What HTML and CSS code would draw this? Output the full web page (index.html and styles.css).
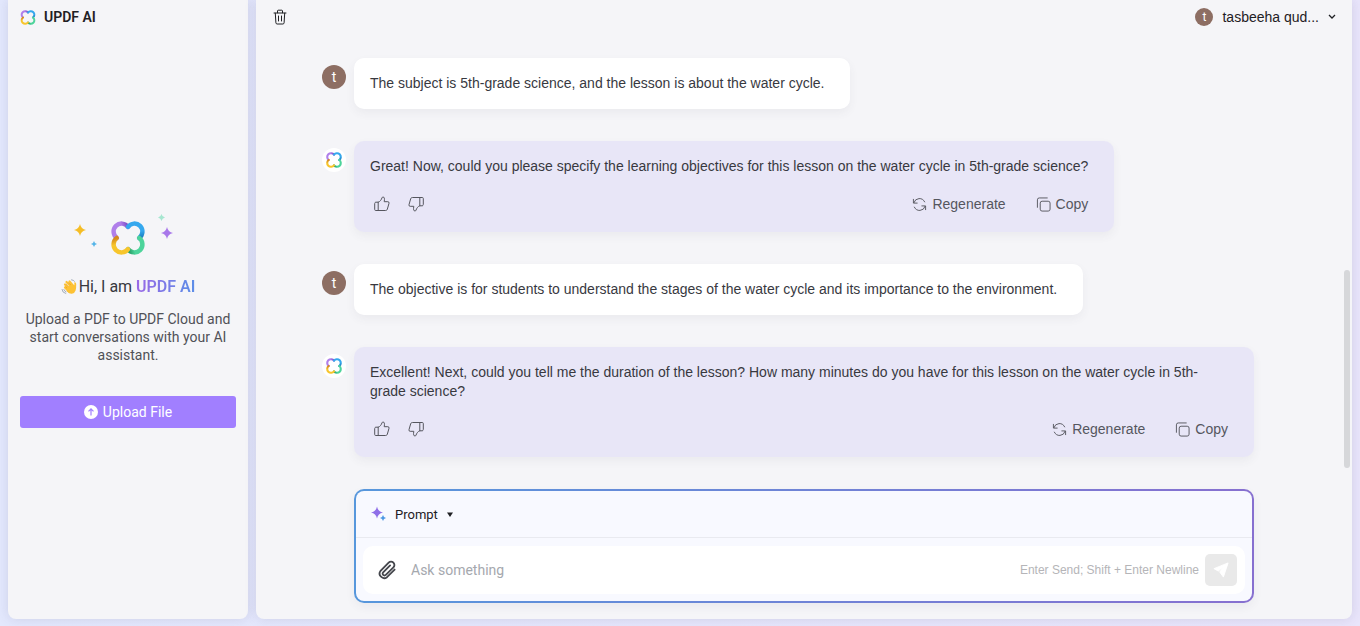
FILE: index.html
```html
<!DOCTYPE html>
<html lang="en">
<head>
<meta charset="utf-8">
<meta name="viewport" content="width=device-width, initial-scale=1">
<title>UPDF AI</title>
<link rel="stylesheet" href="styles.css">
</head>
<body>
<svg class="defs" aria-hidden="true">
  <defs>
    <linearGradient id="g-purple" gradientUnits="userSpaceOnUse" x1="-12" y1="-8" x2="0" y2="-11"><stop offset=".5" stop-color="#b07fea"/><stop offset="1" stop-color="#7a4fc6"/></linearGradient>
    <linearGradient id="g-blue" gradientUnits="userSpaceOnUse" x1="8" y1="-12" x2="11" y2="0"><stop offset=".5" stop-color="#35a8ee"/><stop offset="1" stop-color="#1c7fc0"/></linearGradient>
    <linearGradient id="g-green" gradientUnits="userSpaceOnUse" x1="12" y1="8" x2="0" y2="11"><stop offset=".5" stop-color="#4dd49b"/><stop offset="1" stop-color="#229a63"/></linearGradient>
    <linearGradient id="g-yellow" gradientUnits="userSpaceOnUse" x1="-8" y1="12" x2="-11" y2="0"><stop offset=".5" stop-color="#f7c52c"/><stop offset="1" stop-color="#d58a1c"/></linearGradient>
    <symbol id="clover" viewBox="-17 -17 34 34">
      <g fill="none" stroke-width="4.500" stroke-linecap="round">
        <path stroke="url(#g-purple)" d="M-11.200 0A8 8 0 1 1 0-11.200"/>
        <path stroke="url(#g-blue)" d="M0-11.200A8 8 0 1 1 11.200 0"/>
        <path stroke="url(#g-green)" d="M11.200 0A8 8 0 1 1 0 11.200"/>
        <path stroke="url(#g-yellow)" d="M0 11.200A8 8 0 1 1-11.200 0"/>
      </g>
    </symbol>
    <symbol id="up" viewBox="0 0 16 16"><path d="M1.2 6.500Q.7 6.900.7 7.600v5.900q0 1 1 1h9.900q1.300 0 1.700-1.200l1.700-6q.3-1.600-1.200-1.600H10.200q.9-4.700-1.200-4.700-.7 0-1 .8C7.300 3.800 6.200 5.500 4.200 6.200H1.700M4.200 6.200v8.300" fill="none" stroke="currentColor" stroke-linejoin="round" stroke-linecap="round"/></symbol>
    <symbol id="regen" viewBox="0 0 16 16"><path d="M1.500 2.500v4h4M2 6a6.200 6.200 0 0 1 11.500-.8M14.500 13.500v-4h-4M14 10a6.200 6.200 0 0 1-11.500.8" fill="none" stroke="currentColor" stroke-linecap="round" stroke-linejoin="round"/></symbol>
    <symbol id="copy" viewBox="0 0 16 16"><g fill="none" stroke="currentColor"><rect x="4.500" y="4.500" width="10.500" height="10.500" rx="2"/><path d="M1.500 11V3q0-2 2-2h8.500" stroke-linecap="round"/></g></symbol>
    <symbol id="spark" viewBox="-6 -6 12 12"><path d="M0-6Q1-1 6 0 1 1 0 6-1 1-6 0-1-1 0-6Z" fill="currentColor"/></symbol>
  </defs>
</svg>
<div class="app">
  <aside class="sidebar">
    <header class="brand"><svg class="brand-logo"><use href="#clover"/></svg><span>UPDF AI</span></header>
    <section class="welcome">
      <svg class="hero" viewBox="3 1 110 50">
        <use href="#clover" x="41" y="10" width="34" height="34"/>
        <use href="#spark" x="4" y="13" width="12" height="12" color="#f5bd25"/>
        <use href="#spark" x="21" y="30" width="6" height="6" color="#54b4e8"/>
        <use href="#spark" x="88" y="3" width="7" height="7" color="#a6e6d0"/>
        <use href="#spark" x="91" y="16" width="12" height="12" color="#a877ea"/>
      </svg>
      <h1 class="greeting">
        <svg class="wave" viewBox="0 0 16 16" aria-hidden="true">
          <g fill="none" stroke-linecap="round">
            <path d="M4 5.500l5.500 5.500M5.500 3l6 6M8.500 2.500l5 6M4 8.500l4 4" stroke="#fdc235" stroke-width="2.200"/>
            <path d="M5 5.200l4 4M7.500 3.600l3.500 3.800M4.500 7.700l3 3" stroke="#dc8c1c" stroke-width=".5"/>
          </g>
          <path d="M6 8l5.500-3 1.500 1.500q.6-.5.300-3 1.700-.6 1.900 1.500.1 4.500-.6 6.500-1 3-3.800 3.300-2.500.2-5-2.500z" fill="#fdc235"/>
          <path d="M1 10.500q.3 3.300 3.800 4M2.800 10.500q.5 1.800 2.200 2.300M10.500.8q2 .1 3 1.500" fill="none" stroke="#8f9bab" stroke-width=".8" stroke-linecap="round"/>
        </svg><span>Hi, I am <b>UPDF AI</b></span>
      </h1>
      <p class="intro">Upload a PDF to UPDF Cloud and start conversations with your AI assistant.</p>
      <button class="upload" type="button"><svg viewBox="0 0 14 14"><circle cx="7" cy="7" r="7" fill="#fff"/><path d="M7 10.500V4M4.500 6.300L7 3.800l2.500 2.500" fill="none" stroke="#a17fff" stroke-width="1.200"/></svg>Upload File</button>
    </section>
  </aside>
  <main class="panel">
    <header class="topbar">
      <button class="icon-btn trash" type="button" aria-label="Delete conversation"><svg viewBox="0 0 14 16"><path d="M1 4h12M4.500 3.800V2q0-.8.800-.8h3.400q.8 0 .8.800v1.800M2.300 4.200l.6 9.600q.1 1.200 1.200 1.200h5.800q1.100 0 1.200-1.200l.6-9.600M5.500 7v5M8.500 7v5" fill="none" stroke="currentColor" stroke-linecap="round"/></svg></button>
      <button class="account" type="button"><span class="avatar small">t</span><span>tasbeeha qud...</span><svg viewBox="0 0 8 6"><path d="M1 1l3 3 3-3" fill="none" stroke="currentColor" stroke-width="1.300"/></svg></button>
    </header>
    <div class="chat">
      <article class="message user"><span class="avatar">t</span><div class="bubble"><p>The subject is 5th-grade science, and the lesson is about the water cycle.</p></div></article>
      <article class="message bot"><span class="avatar"><svg><use href="#clover"/></svg></span>
        <div class="bubble"><p>Great! Now, could you please specify the learning objectives for this lesson on the water cycle in 5th-grade science?</p>
          <footer class="actions">
            <button class="icon-btn" type="button" aria-label="Like"><svg><use href="#up"/></svg></button>
            <button class="icon-btn down" type="button" aria-label="Dislike"><svg><use href="#up"/></svg></button>
            <button class="text-btn first" type="button"><svg><use href="#regen"/></svg>Regenerate</button>
            <button class="text-btn" type="button"><svg><use href="#copy"/></svg>Copy</button>
          </footer></div></article>
      <article class="message user"><span class="avatar">t</span><div class="bubble"><p>The objective is for students to understand the stages of the water cycle and its importance to the environment.</p></div></article>
      <article class="message bot"><span class="avatar"><svg><use href="#clover"/></svg></span>
        <div class="bubble"><p>Excellent! Next, could you tell me the duration of the lesson? How many minutes do you have for this lesson on the water cycle in 5th-<wbr>grade science?</p>
          <footer class="actions">
            <button class="icon-btn" type="button" aria-label="Like"><svg><use href="#up"/></svg></button>
            <button class="icon-btn down" type="button" aria-label="Dislike"><svg><use href="#up"/></svg></button>
            <button class="text-btn first" type="button"><svg><use href="#regen"/></svg>Regenerate</button>
            <button class="text-btn" type="button"><svg><use href="#copy"/></svg>Copy</button>
          </footer></div></article>
      <form class="composer">
        <div class="prompt-row"><button class="prompt" type="button">
          <svg class="prompt-icon" viewBox="0 0 16 16"><use href="#spark" x="1" y="0" width="12" height="13" color="#8f6fe8"/><use href="#spark" x="10" y="9" width="6" height="6" color="#4c97e4"/></svg>
          <span>Prompt</span><svg class="caret" viewBox="0 0 6 5"><path d="M0 .5h6L3 5z" fill="currentColor"/></svg></button></div>
        <div class="entry">
          <button class="icon-btn clip" type="button" aria-label="Attach file"><svg viewBox="0 0 24 24"><path d="M19.500 10.500l-8.300 8.300a5 5 0 0 1-7-7L13 3a3.600 3.600 0 0 1 5.200 5.200l-8.300 8.200a2 2 0 0 1-2.900-2.900l7.600-7.500" transform="translate(.8 1)" fill="none" stroke="currentColor" stroke-width="2" stroke-linecap="round"/></svg></button>
          <input type="text" aria-label="Message" placeholder="Ask something">
          <span class="hint">Enter Send; Shift + Enter Newline</span>
          <button class="send" type="submit" aria-label="Send"><svg viewBox="0 0 18 18"><path d="M17 1L1 7.500l5 2.700 5.500-4.500-4 5.500 4.200 5.800z" fill="#fff" stroke="#fff" stroke-linejoin="round"/></svg></button>
        </div>
      </form>
    </div>
    <div class="scroll-thumb"></div>
  </main>
</div>
</body>
</html>
```

FILE: styles.css
```css
* { box-sizing: border-box; }
body {
  margin: 0;
  background: linear-gradient(90deg, #e3e8fd, #e9e5fb);
  color: #38393f;
  font: 14px/19px Roboto, "Liberation Sans", sans-serif;
}
button { padding: 0; border: 0; background: none; color: inherit; font: inherit; cursor: pointer; }
h1, p { margin: 0; font-size: inherit; font-weight: 400; }
svg { flex: none; }
.defs { position: absolute; width: 0; height: 0; }
.app { display: flex; gap: 8px; min-height: 100vh; padding: 0 8px 7px; }
.sidebar, .panel {
  background: #f5f5f8;
  border-radius: 0 0 8px 8px;
  box-shadow: 0 0 12px rgba(80, 80, 120, .16);
}
.sidebar { display: flex; flex-direction: column; width: 240px; padding: 0 12px; }
.brand { display: flex; align-items: center; gap: 8px; height: 34px; color: #1f2024; font-weight: 600; }
.brand-logo { width: 16px; height: 15px; }
.welcome { display: flex; flex-direction: column; align-items: center; padding-top: 178px; }
.hero { width: 110px; height: 50px; }
.greeting { display: flex; align-items: center; gap: 2px; margin-top: 13px; font-size: 16px; line-height: 24px; }
.greeting b { font-weight: 600; color: transparent; background: linear-gradient(90deg, #9a68e6, #5c8ee8); background-clip: text; }
.wave { width: 16px; height: 16px; }
.intro { margin-top: 11px; line-height: 18px; color: #505157; text-align: center; }
.upload {
  display: flex; align-items: center; justify-content: center; gap: 5px;
  align-self: stretch; height: 32px; margin-top: 32px;
  border-radius: 3px; background: #a17fff; color: #fff;
}
.upload svg { width: 14px; height: 14px; }
.panel { position: relative; flex: 1; min-width: 0; }
.topbar { display: flex; align-items: center; justify-content: space-between; height: 34px; padding: 0 16px; color: #1f2024; }
.icon-btn { display: flex; }
.icon-btn svg { width: 16px; height: 16px; }
.account { display: flex; align-items: center; gap: 9px; font-family: "Liberation Sans", sans-serif; }
.account > svg { width: 8px; height: 6px; }
.avatar {
  display: flex; flex: none; align-items: center; justify-content: center;
  width: 24px; height: 24px; border-radius: 50%;
  background: #8d6e63; color: #fff; font-family: Roboto, sans-serif; font-size: 14px;
}
.avatar.small { width: 18px; height: 18px; font-size: 12px; }
.avatar svg { width: 16px; height: 16px; }
.bot .avatar { background: #fff; }
.chat { display: flex; flex-direction: column; gap: 32px; padding: 24px 98px 16px 66px; }
.message { display: flex; align-items: flex-start; gap: 8px; }
.message .avatar { margin-top: 7px; }
.bubble { padding: 16px 26px 16px 16px; border-radius: 10px; background: #fff; box-shadow: 0 4px 10px rgba(60, 60, 90, .06); }
.bubble { font-family: "Liberation Sans", Arial, sans-serif; }
.bot .bubble { background: #e8e6f7; }
.actions { display: flex; align-items: center; gap: 18px; height: 24px; margin-top: 16px; padding-left: 4px; color: #55565e; }
.down svg { transform: rotate(180deg); }
.text-btn { display: flex; align-items: center; gap: 5px; margin-left: 12px; }
.text-btn.first { margin-left: auto; }
.text-btn svg { width: 15px; height: 15px; }
.composer {
  margin-left: 32px; border: 2px solid transparent; border-radius: 10px;
  background: linear-gradient(#f8f9ff, #f8f9ff) padding-box, linear-gradient(90deg, #5797dc, #8770d0) border-box;
  box-shadow: 0 4px 10px rgba(60, 60, 90, .06);
}
.prompt-row { display: flex; height: 47px; padding: 0 14px; border-bottom: 1px solid #e9eaf0; }
.prompt { display: flex; align-items: center; gap: 9px; color: #1f2024; font-size: 13px; }
.prompt-icon { width: 16px; height: 16px; }
.caret { width: 6px; height: 5px; }
.entry { display: flex; align-items: center; height: 48px; margin: 8px 7px 7px; padding: 0 8px 0 13px; border-radius: 10px; background: #fff; }
.clip { color: #44464c; }
.clip svg { width: 22px; height: 22px; }
.entry input { flex: 1; min-width: 0; margin-left: 13px; padding: 0; border: 0; outline: 0; background: none; color: inherit; font: inherit; }
.entry input::placeholder { color: #a5a8ae; opacity: 1; }
.hint { margin-right: 6px; color: #b5b5b8; font-family: "Liberation Sans", sans-serif; font-size: 12px; }
.send { display: flex; align-items: center; justify-content: center; width: 32px; height: 32px; border-radius: 5px; background: #e9e9e9; }
.send svg { width: 16px; height: 16px; }
.scroll-thumb { position: absolute; right: 2px; top: 270px; width: 6px; height: 198px; border-radius: 3px; background: #d6d7da; }
```
